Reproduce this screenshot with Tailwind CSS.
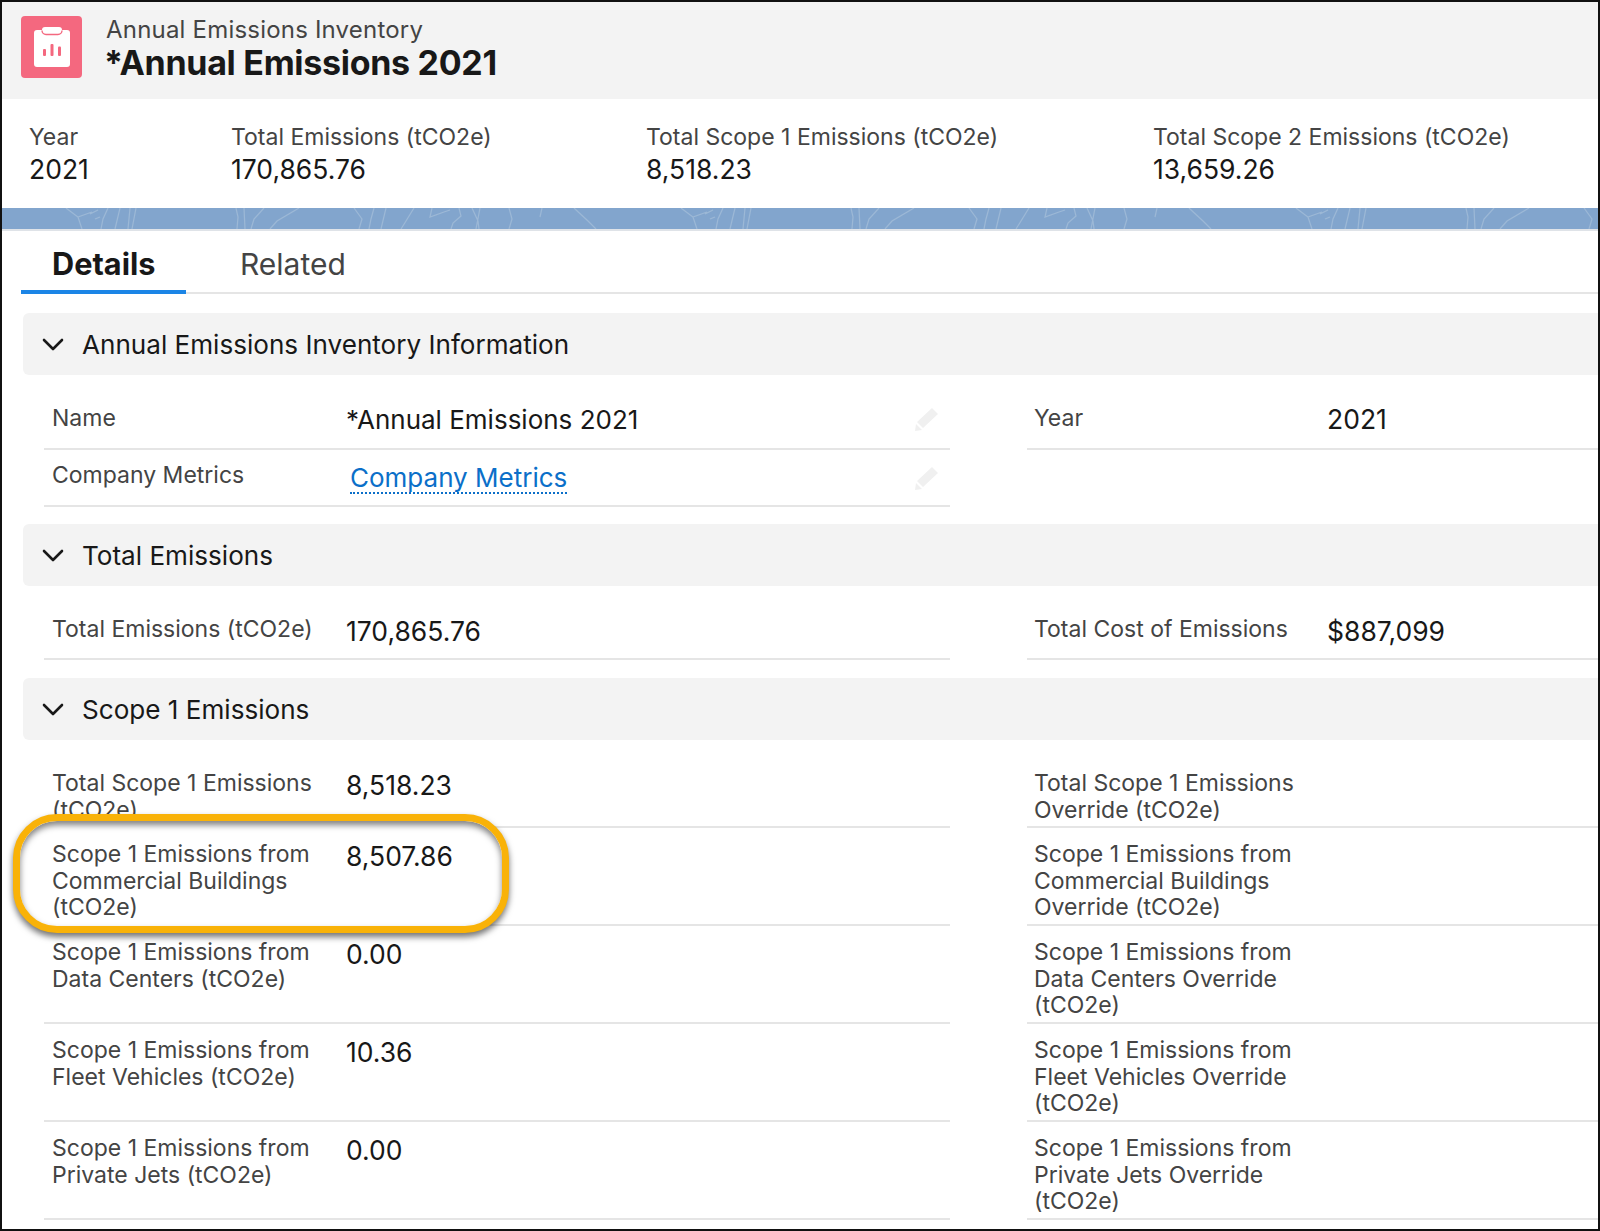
<!DOCTYPE html>
<html lang="en">
<head>
  <meta charset="UTF-8" />
  <title>Annual Emissions 2021</title>
  <script src="https://cdn.jsdelivr.net/npm/@tailwindcss/browser@4"></script>
</head>
<body class="overflow-hidden bg-white font-['Inter',sans-serif] text-[#181818]">
  <div class="w-[1600px] h-[1231px] border-2 border-[#111] overflow-hidden">

    <!-- Header -->
    <header class="h-[97px] bg-[#f3f3f3] flex pl-[19px] pt-[14px]">
      <div class="w-[61px] h-[62px] rounded-[4px] bg-[#f4687f] flex items-center justify-center">
        <svg width="36" height="40" viewBox="0 0 36 40">
          <path fill="#fff" d="M3 3h5a3 3 0 0 1 3-3h14a3 3 0 0 1 3 3h5a3 3 0 0 1 3 3v31a3 3 0 0 1-3 3H3a3 3 0 0 1-3-3V6a3 3 0 0 1 3-3z"/>
          <path fill="none" stroke="#f4687f" stroke-width="1.4" d="M8 3.5a4 4 0 0 0 4 4h12a4 4 0 0 0 4-4"/>
          <rect x="9" y="22" width="3" height="7" rx="1" fill="#f4687f"/>
          <rect x="16.5" y="17" width="3" height="12" rx="1" fill="#f4687f"/>
          <rect x="24" y="19.5" width="3" height="9.5" rx="1" fill="#f4687f"/>
        </svg>
      </div>
      <div class="ml-[24px] -mt-px">
        <p class="text-[24px] leading-[29px] text-[#444] tracking-[0.2px]">Annual Emissions Inventory</p>
        <h1 class="-ml-[2px] text-[34px] leading-[38px] font-bold tracking-[-0.3px]">*Annual Emissions 2021</h1>
      </div>
    </header>

    <!-- Highlights -->
    <div class="h-[109px] flex pt-[22px] pl-[27px]">
      <div class="w-[202px]">
        <p class="leading-[32px] text-[23px] text-[#444]">Year</p>
        <p class="leading-[33px] text-[26.5px]">2021</p>
      </div>
      <div class="w-[415px]">
        <p class="leading-[32px] text-[23px] text-[#444]">Total Emissions (tCO2e)</p>
        <p class="leading-[33px] text-[26.5px]">170,865.76</p>
      </div>
      <div class="w-[507px]">
        <p class="leading-[32px] text-[23px] text-[#444]">Total Scope 1 Emissions (tCO2e)</p>
        <p class="leading-[33px] text-[26.5px]">8,518.23</p>
      </div>
      <div>
        <p class="leading-[32px] text-[23px] text-[#444]">Total Scope 2 Emissions (tCO2e)</p>
        <p class="leading-[33px] text-[26.5px]">13,659.26</p>
      </div>
    </div>

    <!-- Banner -->
    <div class="h-[23px] bg-[#82a5cd] border-b-2 border-[#dfe3e8]">
      <svg width="1600" height="21">
        <defs>
          <pattern id="topo" width="615" height="21" patternUnits="userSpaceOnUse" x="62">
            <path fill="none" stroke="#9cb8d6" stroke-width="1.2" d="M2 0l12 9 4 12M14 9l14-5M34 2l-8 4M36 9l-5 2M44 0l-5 11-2 10M56 0l-5 21M66 0l-2 21M72 0l-4 21M172 0l2 9-1 12M180 0l1 21M200 0l-10 11-3 10M235 0l-22 13-7 8M290 0l8 11-3 10M310 0l-3 11-2 10M322 0l-5 21M350 0l-8 13-5 8M368 0l-2 9 14-5 6-2M395 0l2 8-8 7-2 6M408 0l6 13 1 8M416 0l-4 21M445 0l3 11-3 10M478 0l-2 9M510 0l14 13 8 8"/>
          </pattern>
        </defs>
        <rect width="1600" height="21" fill="url(#topo)"/>
      </svg>
    </div>

    <!-- Tabs -->
    <nav class="ml-[19px] h-[63px] flex border-b-2 border-[#e5e5e5]">
      <a class="w-[165px] h-[63px] pl-[31px] pt-[14px] text-[30.7px] leading-[38px] font-bold border-b-[4px] border-[#1b85e6]">Details</a>
      <a class="ml-[54px] pt-[14px] text-[30px] leading-[38px] text-[#444]">Related</a>
    </nav>

    <!-- Annual Emissions Inventory Information -->
    <section class="mt-[19px] ml-[21px]">
      <h2 class="h-[62px] pt-[1px] bg-[#f3f3f3] rounded-l-[6px] flex items-center text-[26.1px] pl-[19px]">
        <svg class="mr-[18px]" width="22" height="14" viewBox="0 0 22 14"><path fill="none" stroke="#181818" stroke-width="2.6" stroke-linecap="round" stroke-linejoin="round" d="M2 2l9 9 9-9"/></svg>
        Annual Emissions Inventory Information
      </h2>
      <div class="mt-[16px] pl-[21px] grid grid-cols-[906px_1fr] gap-x-[77px]">
        <div class="h-[59px] border-b-2 border-[#e5e5e5] flex pl-[8px] pt-[14px] relative">
          <p class="w-[294px] text-[23px] leading-[26.5px] text-[#444]">Name</p>
          <p class="text-[26px] leading-[29px]">*Annual Emissions 2021</p>
          <svg class="absolute left-[871px] top-[16px]" width="24" height="24" viewBox="0 0 24 24"><path fill="#f0f0f0" d="M17 1l6 6L8 21l-6-6zM1 17l6 6-7 1z"/></svg>
        </div>
        <div class="h-[59px] border-b-2 border-[#e5e5e5] flex pl-[7px] pt-[14px]">
          <p class="w-[293px] text-[23px] leading-[26.5px] text-[#444]">Year</p>
          <p class="text-[26.5px] leading-[29px]">2021</p>
        </div>
        <div class="h-[57px] border-b-2 border-[#e5e5e5] flex pl-[8px] pt-[12px] relative">
          <p class="w-[298px] text-[23px] leading-[26.5px] text-[#444]">Company Metrics</p>
          <p class="h-[31px]"><a class="pt-px text-[26px] leading-[29px] text-[#0b6fc9] border-b-2 border-dotted border-[#0b6fc9] inline-block">Company Metrics</a></p>
          <svg class="absolute left-[871px] top-[16px]" width="24" height="24" viewBox="0 0 24 24"><path fill="#f0f0f0" d="M17 1l6 6L8 21l-6-6zM1 17l6 6-7 1z"/></svg>
        </div>
      </div>
    </section>

    <!-- Total Emissions -->
    <section class="mt-[17px] ml-[21px]">
      <h2 class="h-[62px] pt-[1px] bg-[#f3f3f3] rounded-l-[6px] flex items-center text-[26.1px] pl-[19px]">
        <svg class="mr-[18px]" width="22" height="14" viewBox="0 0 22 14"><path fill="none" stroke="#181818" stroke-width="2.6" stroke-linecap="round" stroke-linejoin="round" d="M2 2l9 9 9-9"/></svg>
        Total Emissions
      </h2>
      <div class="mt-[16px] pl-[21px] grid grid-cols-[906px_1fr] gap-x-[77px]">
        <div class="h-[58px] border-b-2 border-[#e5e5e5] flex pl-[8px] pt-[14px]">
          <p class="w-[294px] text-[23px] leading-[26.5px] text-[#444]">Total Emissions (tCO2e)</p>
          <p class="text-[26.5px] leading-[31px]">170,865.76</p>
        </div>
        <div class="h-[58px] border-b-2 border-[#e5e5e5] flex pl-[7px] pt-[14px]">
          <p class="w-[293px] text-[23px] leading-[26.5px] text-[#444]">Total Cost of Emissions</p>
          <p class="text-[26.5px] leading-[31px]">$887,099</p>
        </div>
      </div>
    </section>

    <!-- Scope 1 Emissions -->
    <section class="mt-[18px] ml-[21px]">
      <h2 class="h-[62px] pt-[1px] bg-[#f3f3f3] rounded-l-[6px] flex items-center text-[26.1px] pl-[19px]">
        <svg class="mr-[18px]" width="22" height="14" viewBox="0 0 22 14"><path fill="none" stroke="#181818" stroke-width="2.6" stroke-linecap="round" stroke-linejoin="round" d="M2 2l9 9 9-9"/></svg>
        Scope 1 Emissions
      </h2>
      <div class="mt-[17px] pl-[21px] grid grid-cols-[906px_1fr] gap-x-[77px]">
        <div class="h-[71px] border-b-2 border-[#e5e5e5] flex pl-[8px] pt-[13px]">
          <p class="w-[294px] pr-[8px] text-[23px] leading-[26.5px] text-[#444]">Total Scope 1 Emissions (tCO2e)</p>
          <p class="text-[26.5px] leading-[30px]">8,518.23</p>
        </div>
        <div class="h-[71px] border-b-2 border-[#e5e5e5] flex pl-[7px] pt-[13px]">
          <p class="w-[293px] text-[23px] leading-[26.5px] text-[#444]">Total Scope 1 Emissions<br />Override (tCO2e)</p>
        </div>

        <div class="h-[98px] border-b-2 border-[#e5e5e5] flex pl-[8px] pt-[13px] relative">
          <!-- highlight around the field -->
          <div class="absolute left-[-31px] top-[-14px] w-[496px] h-[119px] rounded-[44px] bg-white border-[7px] border-[#f9b208] shadow-[0_4px_6px_rgba(0,0,0,0.55),inset_0_4px_6px_rgba(0,0,0,0.5)]"></div>
          <p class="relative w-[294px] pr-[8px] text-[23px] leading-[26.5px] text-[#444]">Scope 1 Emissions from Commercial Buildings (tCO2e)</p>
          <p class="relative text-[26.5px] leading-[30px]">8,507.86</p>
        </div>
        <div class="h-[98px] border-b-2 border-[#e5e5e5] flex pl-[7px] pt-[13px]">
          <p class="w-[293px] text-[23px] leading-[26.5px] text-[#444]">Scope 1 Emissions from<br />Commercial Buildings<br />Override (tCO2e)</p>
        </div>

        <div class="h-[98px] border-b-2 border-[#e5e5e5] flex pl-[8px] pt-[13px]">
          <p class="w-[294px] pr-[8px] text-[23px] leading-[26.5px] text-[#444]">Scope 1 Emissions from Data Centers (tCO2e)</p>
          <p class="text-[26.5px] leading-[30px]">0.00</p>
        </div>
        <div class="h-[98px] border-b-2 border-[#e5e5e5] flex pl-[7px] pt-[13px]">
          <p class="w-[293px] text-[23px] leading-[26.5px] text-[#444]">Scope 1 Emissions from<br />Data Centers Override<br />(tCO2e)</p>
        </div>

        <div class="h-[98px] border-b-2 border-[#e5e5e5] flex pl-[8px] pt-[13px]">
          <p class="w-[294px] pr-[8px] text-[23px] leading-[26.5px] text-[#444]">Scope 1 Emissions from Fleet Vehicles (tCO2e)</p>
          <p class="text-[26.5px] leading-[30px]">10.36</p>
        </div>
        <div class="h-[98px] border-b-2 border-[#e5e5e5] flex pl-[7px] pt-[13px]">
          <p class="w-[293px] text-[23px] leading-[26.5px] text-[#444]">Scope 1 Emissions from<br />Fleet Vehicles Override<br />(tCO2e)</p>
        </div>

        <div class="h-[98px] border-b-2 border-[#e5e5e5] flex pl-[8px] pt-[13px]">
          <p class="w-[294px] pr-[8px] text-[23px] leading-[26.5px] text-[#444]">Scope 1 Emissions from Private Jets (tCO2e)</p>
          <p class="text-[26.5px] leading-[30px]">0.00</p>
        </div>
        <div class="h-[98px] border-b-2 border-[#e5e5e5] flex pl-[7px] pt-[13px]">
          <p class="w-[293px] text-[23px] leading-[26.5px] text-[#444]">Scope 1 Emissions from<br />Private Jets Override<br />(tCO2e)</p>
        </div>
      </div>
    </section>
  </div>
</body>
</html>
